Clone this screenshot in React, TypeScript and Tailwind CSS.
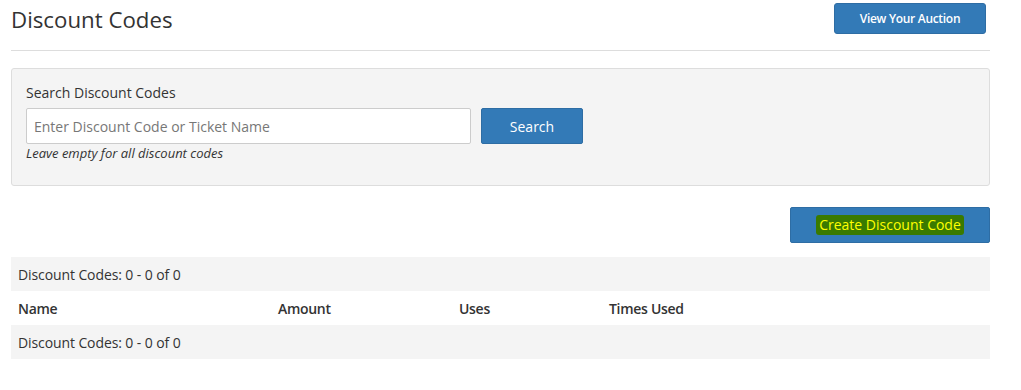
import React from 'react';

export default function App() {
  const columns = [
    { label: 'Name', width: 'w-[260px]' },
    { label: 'Amount', width: 'w-[181px]' },
    { label: 'Uses', width: 'w-[150px]' },
    { label: 'Times Used', width: 'flex-1' },
  ];

  return (
    <div className="w-[1021px] h-[390px] bg-white px-[11px] pt-[3px] text-[#333] font-['Open_Sans',sans-serif] text-[14px]">
      {/* page header */}
      <div className="flex items-start justify-between border-b border-[#ddd] pb-[14px] mr-[20px]">
        <h1 className="text-[22.25px] leading-[32px] mt-[1px] font-normal">Discount Codes</h1>
        <button className="w-[152px] h-[31px] mr-[4px] bg-[#337ab7] border border-[#2e6da4] rounded-[3px] text-white text-[12px] font-semibold tracking-[-0.3px]">
          View Your Auction
        </button>
      </div>

      {/* search panel */}
      <div className="mt-[17px] mr-[20px] h-[118px] bg-[#f4f4f4] border border-[#ddd] rounded-[3px] px-[14px] pt-[14px]">
        <label className="block leading-[20px]">Search Discount Codes</label>
        <div className="flex items-center gap-[10px] mt-[5px]">
          <input
            type="text"
            placeholder="Enter Discount Code or Ticket Name"
            className="w-[445px] h-[36px] bg-white border border-[#ccc] rounded-[2px] px-[7px] text-[14px] placeholder:text-[#777] outline-none"
          />
          <button className="w-[102px] h-[36px] bg-[#337ab7] border border-[#2e6da4] rounded-[2px] text-white text-[14px]">
            Search
          </button>
        </div>
        <p className="italic text-[13px] leading-[18px]">Leave empty for all discount codes</p>
      </div>

      {/* create button */}
      <div className="flex justify-end mt-[21px] mr-[20px]">
        <button className="w-[200px] h-[36px] bg-[#337ab7] border border-[#2e6da4] rounded-[2px] flex items-center justify-center">
          <span className="bg-[#3a7a00] text-[#ffff00] text-[14px] leading-[20px] px-[3px] rounded-[3px]">
            Create Discount Code
          </span>
        </button>
      </div>

      {/* table */}
      <div className="mt-[14px] mr-[20px] text-[14px] tracking-[-0.1px]">
        <div className="h-[34px] bg-[#f4f4f4] flex items-center px-[7px]">Discount Codes: 0 - 0 of 0</div>
        <div className="h-[34px] flex items-center px-[7px] font-semibold tracking-[-0.3px]">
          {columns.map((c) => (
            <div key={c.label} className={c.width}>{c.label}</div>
          ))}
        </div>
        <div className="h-[34px] bg-[#f4f4f4] flex items-center px-[7px]">Discount Codes: 0 - 0 of 0</div>
      </div>
    </div>
  );
}
